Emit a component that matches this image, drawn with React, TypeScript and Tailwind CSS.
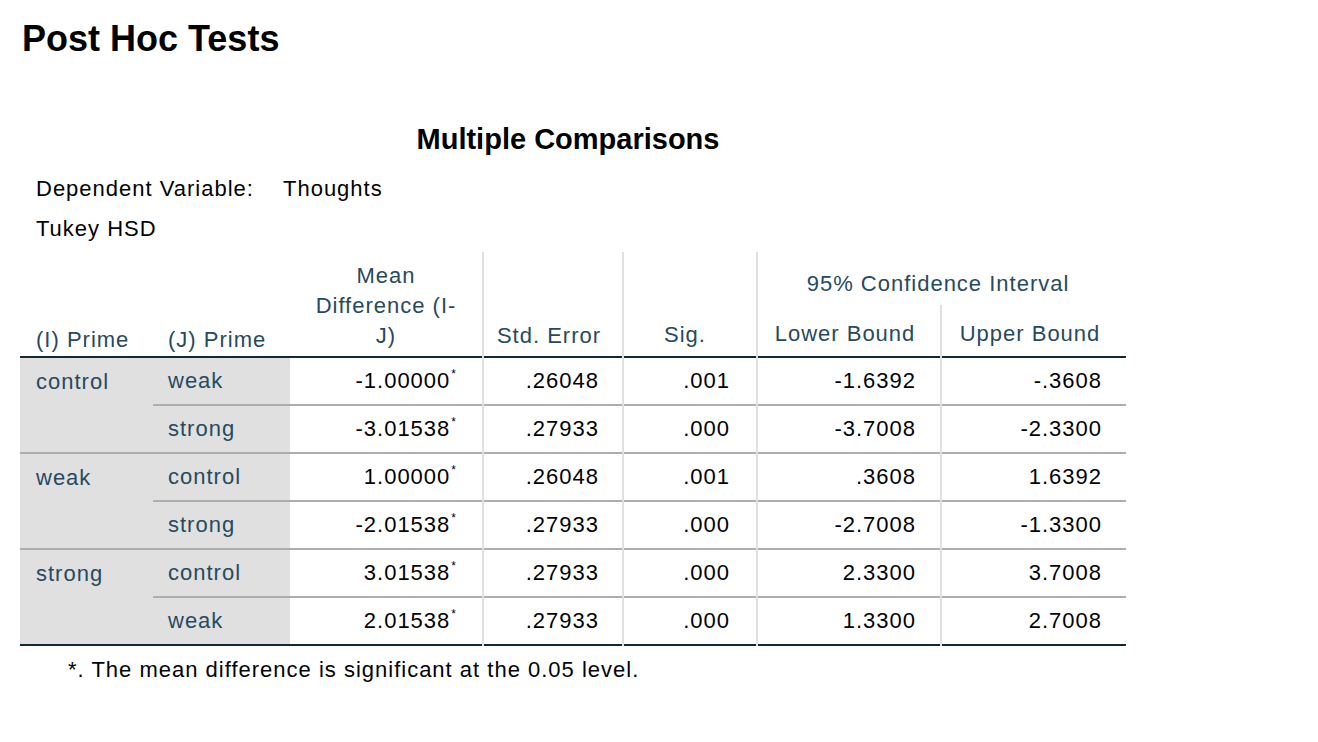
import React from 'react'

interface Row {
  i: string
  j: string
  diff: string
  se: string
  sig: string
  lower: string
  upper: string
}

const rows: Row[] = [
  { i: 'control', j: 'weak', diff: '-1.00000', se: '.26048', sig: '.001', lower: '-1.6392', upper: '-.3608' },
  { i: '', j: 'strong', diff: '-3.01538', se: '.27933', sig: '.000', lower: '-3.7008', upper: '-2.3300' },
  { i: 'weak', j: 'control', diff: '1.00000', se: '.26048', sig: '.001', lower: '.3608', upper: '1.6392' },
  { i: '', j: 'strong', diff: '-2.01538', se: '.27933', sig: '.000', lower: '-2.7008', upper: '-1.3300' },
  { i: 'strong', j: 'control', diff: '3.01538', se: '.27933', sig: '.000', lower: '2.3300', upper: '3.7008' },
  { i: '', j: 'weak', diff: '2.01538', se: '.27933', sig: '.000', lower: '1.3300', upper: '2.7008' },
]

const font = { fontFamily: '"Liberation Sans", Arial, sans-serif' }

export default function App() {
  return (
    <div className="min-h-[742px] w-[1318px] bg-white text-black" style={font}>
      <h1 className="pl-[22px] pt-[19px] text-[36px] font-bold leading-[40px] text-black">Post Hoc Tests</h1>

      <div className="ml-[20px] w-[1106px]">
        <div className="mt-[62px] pr-[10px] text-center text-[29px] font-bold leading-[36px] text-black">
          Multiple Comparisons
        </div>

        {/* Layer info */}
        <div className="mt-[12px] pl-[16px] text-[22px] leading-[40px] tracking-[1px] text-[#010205]">
          <div>
            Dependent Variable:<span className="inline-block w-[29px]" />Thoughts
          </div>
          <div>Tukey HSD</div>
        </div>

        <table className="mt-[3px] w-[1106px] table-fixed border-collapse text-[22px] leading-[30px] tracking-[1px]">
          <colgroup>
            <col className="w-[133px]" />
            <col className="w-[137px]" />
            <col className="w-[193px]" />
            <col className="w-[140px]" />
            <col className="w-[134px]" />
            <col className="w-[184px]" />
            <col className="w-[185px]" />
          </colgroup>
          <thead className="text-[#264a60]">
            <tr className="h-[53px]">
              <th rowSpan={2} className="pb-[1px] pl-[16px] text-left align-bottom font-normal">
                (I) Prime
              </th>
              <th rowSpan={2} className="pb-[1px] pl-[15px] text-left align-bottom font-normal">
                (J) Prime
              </th>
              <th rowSpan={2} className="pb-[5px] text-center align-bottom font-normal">
                Mean
                <br />
                Difference (I-
                <br />
                J)
              </th>
              <th rowSpan={2} className="border-l-2 border-[#e0e0e0] pb-[5px] pr-[8px] text-center align-bottom font-normal">
                Std. Error
              </th>
              <th rowSpan={2} className="border-l-2 border-[#e0e0e0] pb-[6px] pr-[10px] text-center align-bottom font-normal">
                Sig.
              </th>
              <th colSpan={2} className="border-l-2 border-[#e0e0e0] pb-[6px] pr-[8px] text-center align-bottom font-normal">
                95% Confidence Interval
              </th>
            </tr>
            <tr className="h-[52px]">
              <th className="border-l-2 border-[#e0e0e0] pb-[7px] pr-[8px] text-center align-bottom font-normal">
                Lower Bound
              </th>
              <th className="border-l-2 border-[#e0e0e0] pb-[7px] pr-[8px] text-center align-bottom font-normal">
                Upper Bound
              </th>
            </tr>
          </thead>
          <tbody className="border-t-2 border-b-2 border-[#152935]">
            {rows.map((r, idx) => {
              const groupStart = idx % 2 === 0
              const line = idx === 0 ? '' : 'border-t-2 border-t-[#aeaeae]'
              return (
                <tr key={idx} className="h-[48px]">
                  {groupStart && (
                    <td rowSpan={2} className={`bg-[#e0e0e0] pl-[16px] align-top pt-[9px] text-[#264a60] ${line}`}>
                      {r.i}
                    </td>
                  )}
                  <td className={`bg-[#e0e0e0] pl-[15px] text-[#264a60] ${line}`}>{r.j}</td>
                  <td className={`pr-[25px] text-right text-[#010205] ${line}`}>
                    {r.diff}
                    <sup className="relative top-[-10px] ml-[1px] text-[12px] leading-none">*</sup>
                  </td>
                  <td className={`border-l-2 border-l-[#e0e0e0] pr-[23px] text-right text-[#010205] ${line}`}>{r.se}</td>
                  <td className={`border-l-2 border-l-[#e0e0e0] pr-[26px] text-right text-[#010205] ${line}`}>{r.sig}</td>
                  <td className={`border-l-2 border-l-[#e0e0e0] pr-[24px] text-right text-[#010205] ${line}`}>{r.lower}</td>
                  <td className={`border-l-2 border-l-[#e0e0e0] pr-[24px] text-right text-[#010205] ${line}`}>{r.upper}</td>
                </tr>
              )
            })}
          </tbody>
        </table>

        <div className="mt-[12px] pl-[48px] text-[22px] leading-[24px] tracking-[1px] text-[#010205]">
          *. The mean difference is significant at the 0.05 level.
        </div>
      </div>
    </div>
  )
}
